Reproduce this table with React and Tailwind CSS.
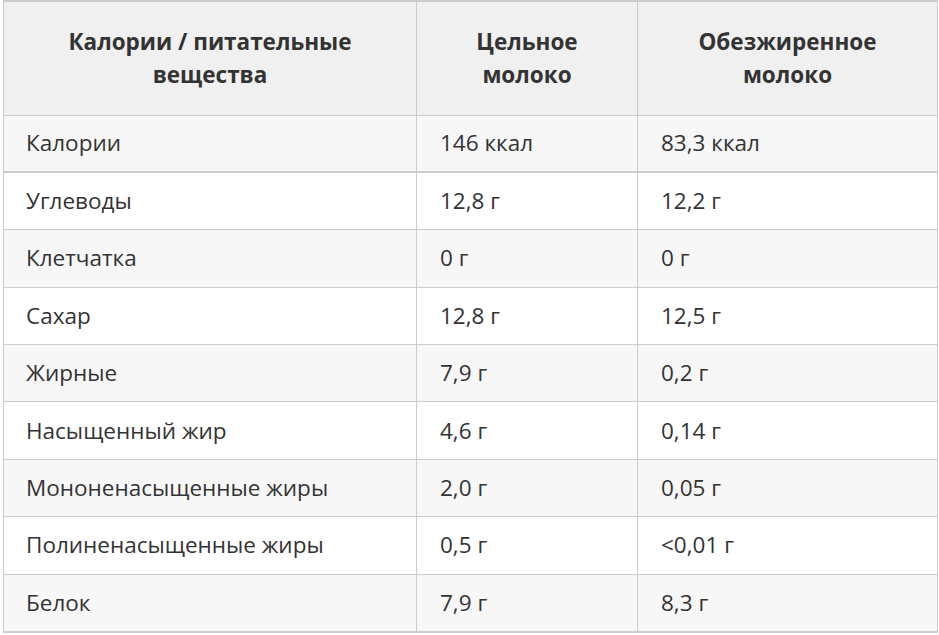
const rows = [
  ["Калории", "146 ккал", "83,3 ккал"],
  ["Углеводы", "12,8 г", "12,2 г"],
  ["Клетчатка", "0 г", "0 г"],
  ["Сахар", "12,8 г", "12,5 г"],
  ["Жирные", "7,9 г", "0,2 г"],
  ["Насыщенный жир", "4,6 г", "0,14 г"],
  ["Мононенасыщенные жиры", "2,0 г", "0,05 г"],
  ["Полиненасыщенные жиры", "0,5 г", "<0,01 г"],
  ["Белок", "7,9 г", "8,3 г"],
];

export default function App() {
  return (
    <div className="min-h-screen bg-white pl-[3px] font-['Open_Sans',sans-serif] text-[#333]">
      <table className="w-[934px] table-fixed border-collapse border border-y-2 border-[#ccc]">
        <colgroup>
          <col className="w-[413px]" />
          <col className="w-[221px]" />
          <col className="w-[300px]" />
        </colgroup>
        <thead>
          <tr className="h-[114px] bg-[#f0f0f0]">
            <th className="border border-[#ccc] px-6 text-center text-[22.5px] font-bold leading-[33px]">
              Калории / питательные
              <br />
              вещества
            </th>
            <th className="border border-[#ccc] px-6 text-center text-[22.5px] font-bold leading-[33px]">
              Цельное
              <br />
              молоко
            </th>
            <th className="border border-[#ccc] px-6 text-center text-[22.5px] font-bold leading-[33px]">
              Обезжиренное
              <br />
              молоко
            </th>
          </tr>
        </thead>
        <tbody>
          {rows.map((r, i) => (
            <tr
              key={r[0]}
              className={`h-[57.4px] ${i % 2 === 0 ? "bg-[#f7f7f7]" : "bg-white"} ${i === 0 ? "border-b-2 border-[#ccc]" : ""}`}
            >
              {r.map((c, j) => (
                <td
                  key={j}
                  className={`border border-[#ccc] pr-6 text-left text-[22.5px] leading-[32px] ${j === 0 ? "pl-[22px]" : "pl-[23px]"}`}
                >
                  {c}
                </td>
              ))}
            </tr>
          ))}
        </tbody>
      </table>
    </div>
  );
}
